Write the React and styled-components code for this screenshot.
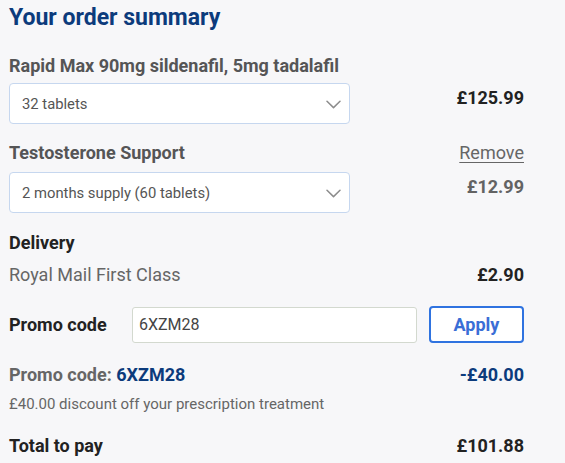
import styled, { createGlobalStyle } from "styled-components";

const GlobalStyle = createGlobalStyle`
  html, body {
    margin: 0;
    padding: 0;
    background: #f7f7f9;
  }
  body {
    font-family: Roboto, "Liberation Sans", Arial, sans-serif;
  }
`;

function Chevron() {
  return (
    <svg width="15" height="9" viewBox="0 0 15 9" fill="none">
      <path d="M1 1.2 L7.5 7.6 L14 1.2" stroke="#8c8c8c" strokeWidth="1.5" strokeLinecap="round" strokeLinejoin="round" />
    </svg>
  );
}

function Select({ value }) {
  return (
    <SelectBox>
      <span>{value}</span>
      <Chevron />
    </SelectBox>
  );
}

export default function App() {
  return (
    <>
      <GlobalStyle />
      <Summary>
        <Title>Your order summary</Title>

        <Item gap={6}>
          <ItemName>Rapid Max 90mg sildenafil, 5mg tadalafil</ItemName>
          <OptionRow>
            <Select value="32 tablets" />
            <Price>£125.99</Price>
          </OptionRow>
        </Item>

        <Item gap={8}>
          <Row>
            <ItemName>Testosterone Support</ItemName>
            <RemoveLink href="#">Remove</RemoveLink>
          </Row>
          <OptionRow>
            <Select value="2 months supply (60 tablets)" />
            <Price muted>£12.99</Price>
          </OptionRow>
        </Item>

        <Delivery>
          <Label>Delivery</Label>
          <Row>
            <Plain>Royal Mail First Class</Plain>
            <Price>£2.90</Price>
          </Row>
        </Delivery>

        <PromoRow>
          <PromoLabel>Promo code</PromoLabel>
          <PromoInput defaultValue="6XZM28" />
          <ApplyButton>Apply</ApplyButton>
        </PromoRow>

        <Discount>
          <Row>
            <DiscountName>
              Promo code: <Code>6XZM28</Code>
            </DiscountName>
            <Price accent>-£40.00</Price>
          </Row>
          <Note>£40.00 discount off your prescription treatment</Note>
        </Discount>

        <Total>
          <Label>Total to pay</Label>
          <Price>£101.88</Price>
        </Total>
      </Summary>
    </>
  );
}

const Summary = styled.div`
  width: 515px;
  padding: 4px 0 0 9px;
  display: flex;
  flex-direction: column;
`;

const Title = styled.h2`
  margin: 0 0 23px;
  font-size: 23px;
  font-weight: 700;
  color: #0c3b7c;
  line-height: 28px;
`;

const Item = styled.div`
  display: flex;
  flex-direction: column;
  gap: ${({ gap }) => gap}px;
  margin-bottom: 18px;
`;

const Row = styled.div`
  display: flex;
  align-items: center;
  justify-content: space-between;
  line-height: 22px;
`;

const OptionRow = styled.div`
  display: flex;
  align-items: flex-start;
  justify-content: space-between;

  > div:last-child {
    margin-top: 4px;
  }
`;

const ItemName = styled.div`
  font-size: 18px;
  font-weight: 700;
  color: #555556;
  line-height: 22px;
`;

const SelectBox = styled.div`
  box-sizing: border-box;
  width: 341px;
  height: 41px;
  padding: 0 8px 0 12px;
  display: flex;
  align-items: center;
  justify-content: space-between;
  background: #fff;
  border: 1px solid #c6d7ef;
  border-radius: 4px;
  font-size: 14.8px;
  color: #555;

  svg {
    margin-top: 2px;
  }
`;

const Price = styled.div`
  font-size: 18px;
  font-weight: 700;
  line-height: 22px;
  color: ${({ muted, accent }) => (accent ? "#0c3b7c" : muted ? "#636363" : "#222")};
`;

const RemoveLink = styled.a`
  font-size: 18px;
  color: #666;
  text-decoration: underline;
  text-underline-offset: 3px;
  text-decoration-thickness: 1px;
`;

const Delivery = styled.div`
  display: flex;
  flex-direction: column;
  gap: 10px;
  margin-top: 1px;
  margin-bottom: 20px;
`;

const Label = styled.div`
  font-size: 18px;
  font-weight: 700;
  color: #222;
  line-height: 22px;
`;

const PromoLabel = styled(Label)`
  width: 123px;
`;

const Plain = styled.div`
  font-size: 18px;
  color: #666;
`;

const PromoRow = styled.div`
  display: flex;
  align-items: center;
  height: 37px;
  margin-bottom: 21px;
`;

const PromoInput = styled.input`
  box-sizing: border-box;
  width: 285px;
  height: 36px;
  padding: 0 6px;
  border: 1px solid #d3d9cf;
  border-radius: 3px;
  background: #fff;
  font-family: inherit;
  font-size: 16px;
  color: #444;
  outline: none;
`;

const ApplyButton = styled.button`
  box-sizing: border-box;
  margin-left: auto;
  width: 95px;
  height: 37px;
  border: 2px solid #2f73e0;
  border-radius: 4px;
  background: #fff;
  font-family: inherit;
  font-size: 18px;
  font-weight: 700;
  color: #3a6ed6;
  cursor: pointer;
`;

const Discount = styled.div`
  display: flex;
  flex-direction: column;
  gap: 9px;
  margin-bottom: 22px;
`;

const DiscountName = styled.div`
  font-size: 18px;
  font-weight: 700;
  color: #666;
`;

const Code = styled.span`
  color: #0c3b7c;
`;

const Note = styled.div`
  font-size: 15px;
  line-height: 18px;
  color: #666;
`;

const Total = styled.div`
  display: flex;
  align-items: center;
  justify-content: space-between;
  line-height: 22px;
`;
